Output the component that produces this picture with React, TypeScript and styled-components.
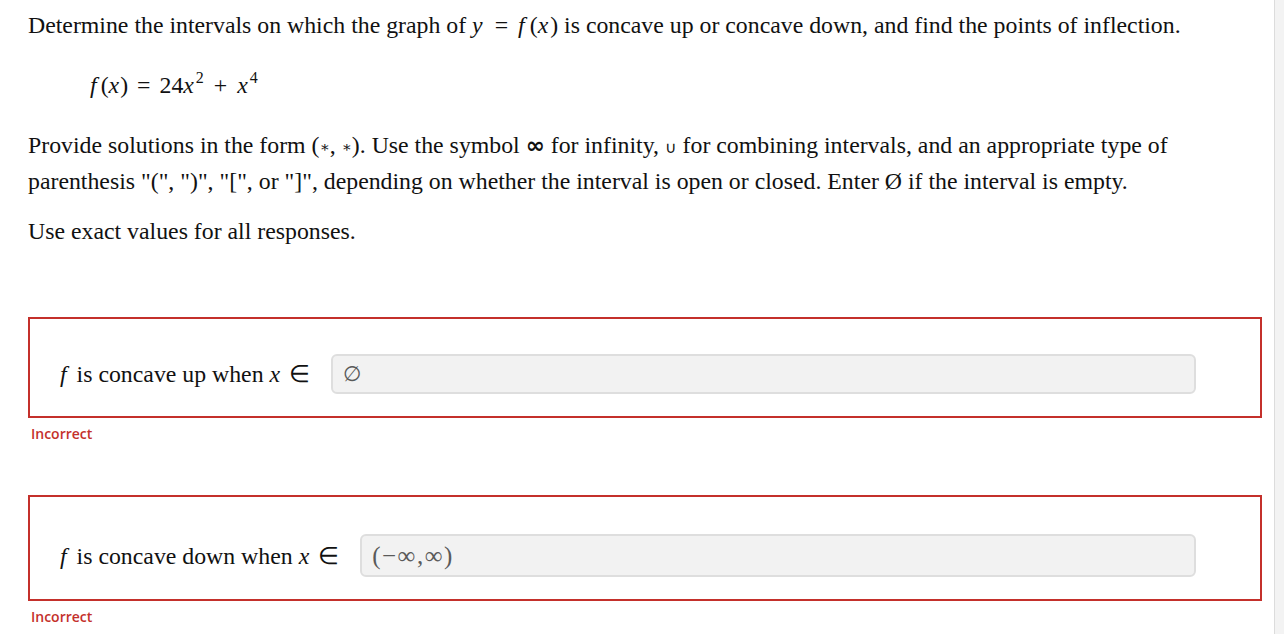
import React from "react";
import styled, { createGlobalStyle } from "styled-components";

const GlobalStyle = createGlobalStyle`
    html, body {
        margin: 0;
        padding: 0;
        background: #ffffff;
    }
    body {
        font-family: "Liberation Serif", "Times New Roman", serif;
        color: #111;
    }
`;

const Page = styled.div`
    display: flex;
    flex-direction: row;
    width: 1284px;
    height: 634px;
    overflow: hidden;
`;

const Main = styled.div`
    flex: 1;
    padding: 7px 12px 0 28px;
    font-size: 23.8px;
    line-height: 36px;
`;

const Track = styled.div`
    width: 9px;
    background: #f3f3f3;
    border-left: 1px solid #dcdcdc;
`;

const Para = styled.p<{ $top?: number }>`
    margin: ${(p) => p.$top ?? 0}px 0 0 0;
`;

const Formula = styled.div`
    margin: 24px 0 0 62px;
`;

// italic math letter, MathJax style leaves a little room after it
const I = styled.i<{ $r?: number }>`
    font-style: italic;
    margin-right: ${(p) => p.$r ?? 1}px;
`;

const Op = styled.span<{ $m?: number }>`
    margin: 0 ${(p) => p.$m ?? 8}px;
`;

const Sup = styled.sup`
    font-size: 16px;
    line-height: 0;
    vertical-align: 10px;
    margin-left: 1px;
`;

const Star = styled.span`
    font-family: "DejaVu Serif", serif;
    font-size: 15px;
    line-height: 1;
    vertical-align: 1px;
`;

const Sym = styled.span<{ $size: number; $bold?: boolean }>`
    font-family: "DejaVu Sans", sans-serif;
    font-size: ${(p) => p.$size}px;
    font-weight: ${(p) => (p.$bold ? 700 : 400)};
    line-height: 1;
`;

const AnswerBox = styled.div<{ $top: number; $pad: number }>`
    display: flex;
    align-items: center;
    gap: 21px;
    margin-top: ${(p) => p.$top}px;
    border: 2px solid #c4302b;
    padding: ${(p) => p.$pad}px 64px 22px 30px;
`;

const Label = styled.div`
    white-space: nowrap;
`;

const Field = styled.div<{ $h: number }>`
    flex: 1;
    height: ${(p) => p.$h}px;
    box-sizing: border-box;
    background: #f2f2f2;
    border: 2px solid #dedede;
    border-radius: 6px;
    display: flex;
    align-items: center;
    padding-left: 10px;
    color: #5a5a5a;
`;

const EmptySet = styled.span`
    font-family: "DejaVu Sans", sans-serif;
    font-size: 21px;
`;

const Value = styled.span`
    font-size: 25px;
    letter-spacing: 1.5px;
`;

const Status = styled.div<{ $bottom: number }>`
    font-family: "Open Sans", "Liberation Sans", sans-serif;
    font-weight: 600;
    font-size: 14px;
    line-height: 18px;
    color: #c4302b;
    margin: 7px 0 ${(p) => p.$bottom}px 3px;
`;

const App: React.FC = () => {
    return (
        <>
            <GlobalStyle />
            <Page>
                <Main>
                    <Para>
                        Determine the intervals on which the graph of <I $r={2}>y</I>
                        <Op $m={10}>=</Op>
                        <I $r={5}>f</I>(<I $r={2}>x</I>) is concave up or concave down, and find the points of
                        inflection.
                    </Para>
                    <Formula>
                        <I $r={4}>f</I>(<I>x</I>)<Op $m={9}>=</Op>24<I>x</I>
                        <Sup>2</Sup>
                        <Op $m={10}>+</Op>
                        <I>x</I>
                        <Sup>4</Sup>
                    </Formula>
                    <Para $top={24}>
                        Provide solutions in the form (<Star>∗</Star>, <Star>∗</Star>). Use the symbol{" "}
                        <Sym $size={23} $bold>∞</Sym> for infinity, <Sym $size={16}>∪</Sym> for combining intervals,
                        and an appropriate type of parenthesis "(", ")", "[", or "]", depending on whether the interval
                        is open or closed. Enter Ø if the interval is empty.
                    </Para>
                    <Para $top={14}>Use exact values for all responses.</Para>

                    <AnswerBox $top={68} $pad={35}>
                        <Label>
                            <I $r={4}>f</I> is concave up when <I $r={3}>x</I> ∈
                        </Label>
                        <Field $h={40}>
                            <EmptySet>∅</EmptySet>
                        </Field>
                    </AnswerBox>
                    <Status $bottom={52}>Incorrect</Status>

                    <AnswerBox $top={0} $pad={37}>
                        <Label>
                            <I $r={4}>f</I> is concave down when <I $r={3}>x</I> ∈
                        </Label>
                        <Field $h={43}>
                            <Value>(−∞,∞)</Value>
                        </Field>
                    </AnswerBox>
                    <Status $bottom={0}>Incorrect</Status>
                </Main>
                <Track />
            </Page>
        </>
    );
};

export default App;
